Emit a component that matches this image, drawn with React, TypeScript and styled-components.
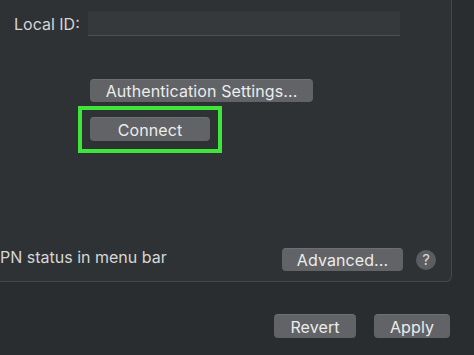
import * as React from 'react';
import styled, { createGlobalStyle } from 'styled-components';

const Global = createGlobalStyle`
  html, body {
    margin: 0;
    padding: 0;
    background: #2a2d2f;
    overflow: hidden;
  }
  body {
    font-family: Inter, 'Noto Sans', sans-serif;
    -webkit-font-smoothing: antialiased;
  }
`;

const Window = styled.div`
  width: 474px;
  height: 355px;
  display: flex;
  flex-direction: column;
  background: #2a2d2f;
  color: #dcdcdc;
`;

const Panel = styled.div`
  width: 452px;
  height: 282px;
  box-sizing: border-box;
  background: #2f3234;
  border-right: 1px solid #45484a;
  border-bottom: 1px solid #45484a;
  border-bottom-right-radius: 6px;
  display: flex;
  flex-direction: column;
`;

const FieldRow = styled.div`
  display: flex;
  align-items: center;
  padding: 11px 0 0 14px;
  gap: 8px;
`;

const Label = styled.span`
  font-size: 16px;
  color: #d6d6d6;
`;

const TextInput = styled.div`
  width: 312px;
  height: 25px;
  box-sizing: border-box;
  background: #36393b;
  border-bottom: 1px solid #4d5052;
`;

const Actions = styled.div`
  display: flex;
  flex-direction: column;
  align-items: flex-start;
  margin: 43px 0 0 78px;
  gap: 4px;
`;

interface ButtonProps {
  $width: number;
  $height?: number;
}

const Button = styled.div<ButtonProps>`
  width: ${(p) => p.$width}px;
  height: ${(p) => p.$height ?? 23}px;
  box-sizing: border-box;
  display: flex;
  align-items: center;
  justify-content: center;
  background: #616366;
  border-radius: 4px;
  border-top: 1px solid #6d6f72;
  color: #ececec;
  font-size: 16px;
  letter-spacing: 0.1px;
`;

const IndentedButton = styled(Button)`
  margin-left: 12px;
`;

const Highlight = styled.div`
  border: 4px solid #3ee63a;
  padding: 7px 8px 8px 8px;
`;

const StatusRow = styled.div`
  margin-top: auto;
  display: flex;
  align-items: center;
  padding-bottom: 10px;
`;

const StatusText = styled.span`
  font-size: 16px;
  color: #d6d6d6;
  flex: 1;
  margin-top: -6px;
`;

const HelpButton = styled.div`
  width: 20px;
  height: 20px;
  margin: 0 15px 0 13px;
  border-radius: 50%;
  background: #5b5d60;
  color: #d8d8d8;
  font-size: 15px;
  display: flex;
  align-items: center;
  justify-content: center;
`;

const Footer = styled.div`
  display: flex;
  justify-content: flex-end;
  gap: 18px;
  padding: 32px 24px 0 0;
`;

export default function App() {
  return (
    <>
      <Global />
      <Window>
        <Panel>
          <FieldRow>
            <Label>Local ID:</Label>
            <TextInput />
          </FieldRow>
          <Actions>
            <IndentedButton $width={223}>Authentication Settings...</IndentedButton>
            <Highlight>
              <Button $width={120} $height={24}>Connect</Button>
            </Highlight>
          </Actions>
          <StatusRow>
            <StatusText>PN status in menu bar</StatusText>
            <Button $width={121}>Advanced...</Button>
            <HelpButton>?</HelpButton>
          </StatusRow>
        </Panel>
        <Footer>
          <Button $width={82} $height={24}>Revert</Button>
          <Button $width={76} $height={24}>Apply</Button>
        </Footer>
      </Window>
    </>
  );
}
